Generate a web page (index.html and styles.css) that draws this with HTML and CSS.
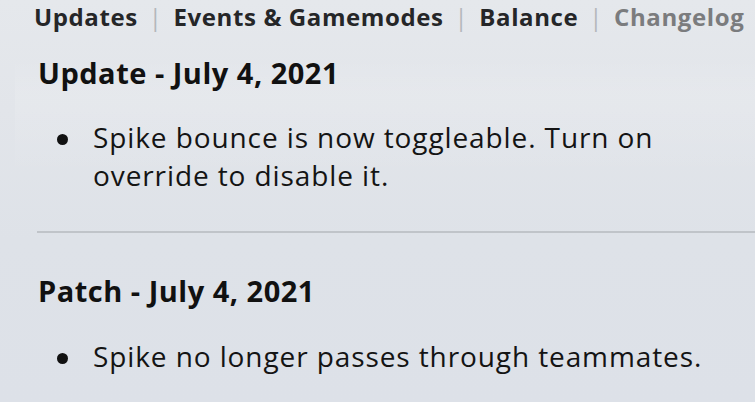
FILE: index.html
```html
<!DOCTYPE html>
<html lang="en">
<head>
<meta charset="utf-8">
<title>Changelog</title>
<link rel="stylesheet" href="styles.css">
</head>
<body>
<div class="page">
  <nav class="tabs">
    <a class="tab">Updates</a>
    <span class="sep">|</span>
    <a class="tab">Events &amp; Gamemodes</a>
    <span class="sep">|</span>
    <a class="tab">Balance</a>
    <span class="sep">|</span>
    <a class="tab tab-muted">Changelog</a>
  </nav>
  <section class="entry entry-first">
    <h2 class="entry-title">Update - July 4, 2021</h2>
    <ul class="notes">
      <li class="note">Spike bounce is now toggleable. Turn on override to disable it.</li>
    </ul>
  </section>
  <hr class="divider">
  <section class="entry">
    <h2 class="entry-title">Patch - July 4, 2021</h2>
    <ul class="notes">
      <li class="note">Spike no longer passes through teammates.</li>
    </ul>
  </section>
</div>
</body>
</html>
```
FILE: styles.css
```css
html, body {
  margin: 0;
  padding: 0;
}
body {
  width: 755px;
  height: 402px;
  overflow: hidden;
  font-family: "Open Sans", "DejaVu Sans", sans-serif;
  color: #141414;
  background: linear-gradient(180deg, #e5e8ec 0px, #e2e5ea 110px, #dee2e8 240px, #dde1e8 402px);
}
.page {
  display: flex;
  flex-direction: column;
}
.tabs {
  display: flex;
  align-items: center;
  height: 34px;
  line-height: 34px;
  padding-left: 34px;
  font-size: 24px;
  font-weight: 700;
  letter-spacing: 0.6px;
  white-space: nowrap;
  gap: 11px;
}
.tab {
  color: #252628;
}
.tab-muted {
  color: #7b7c7e;
}
.sep {
  color: #b4b7bb;
  font-weight: 400;
}
.entry {
  padding-left: 38px;
}
.entry-first {
  margin-left: 15px;
  padding-left: 23px;
  margin-top: 23px;
  background: linear-gradient(180deg, rgba(255,255,255,0) 0px, rgba(255,255,255,0.12) 40px, rgba(255,255,255,0) 120px);
}
.entry-title {
  margin: 0;
  font-size: 29px;
  line-height: 32px;
  letter-spacing: 0.5px;
  font-weight: 700;
  color: #111;
}
.notes {
  list-style: none;
  margin: 29px 0 0 0;
  padding: 0;
}
.entry + .divider + .entry .notes {
  margin-top: 30px;
}
.note {
  display: flex;
  font-size: 28px;
  line-height: 38px;
  letter-spacing: 0.9px;
  color: #141414;
  padding-right: 22px;
}
.note::before {
  content: "";
  flex: none;
  width: 11px;
  height: 11px;
  border-radius: 50%;
  background: #111;
  margin: 16px 25px 0 19px;
}
.divider {
  margin: 37px 0 42px 37px;
  border: 0;
  height: 2px;
  background: #c0c4c9;
}
```
